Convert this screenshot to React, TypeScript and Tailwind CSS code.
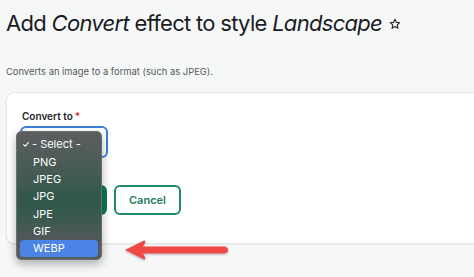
import React from "react";

const items = ["PNG", "JPEG", "JPG", "JPE", "GIF", "WEBP"];

export default function App() {
  return (
    <div className="relative w-[474px] h-[277px] overflow-hidden bg-[#f6f8f8] font-['Inter','Noto_Sans',sans-serif] text-[#1f2023]">
      <div className="pl-[6px] pt-[8px]">
        <h1 className="flex items-center text-[22px] leading-[30px] font-normal tracking-[-0.7px] text-[#1b1c1f]">
          <span>
            Add <em>Convert</em> effect to style <em>Landscape</em>
          </span>
          <svg className="ml-[7px] mt-[1px]" width="12" height="12" viewBox="0 0 24 24" fill="none" stroke="#222" strokeWidth="2.2" strokeLinejoin="round">
            <path d="M12 2.5l2.9 6.2 6.6.7-5 4.5 1.4 6.6L12 17.2l-5.9 3.3 1.4-6.6-5-4.5 6.6-.7z" />
          </svg>
        </h1>
        <p className="mt-[27px] text-[9.4px] leading-[14px] text-[#55595c]">
          Converts an image to a format (such as JPEG).
        </p>
      </div>

      <div className="ml-[6px] mt-[13px] w-[500px] h-[152px] rounded-l-[8px] border border-[#e4e8e8] bg-white shadow-[0_1px_2px_rgba(0,0,0,0.06)] pl-[15px] pt-[16px]">
        <div className="text-[10px] leading-[14px] font-semibold text-[#232429]">
          Convert to<span className="ml-[2px] text-[#d32a2a]">*</span>
        </div>
        <div className="relative mt-[3px] -ml-[2px] w-[88px] h-[32px] rounded-[6px] border-2 border-[#3c7fd6] bg-white">
          <div className="absolute left-[-6px] top-[3px] z-10 w-[86px] h-[129px] rounded-[5px] border border-[#6b6e70] bg-[linear-gradient(180deg,#5c5f60_0%,#4f5c58_20%,#3c5a4f_42%,#30574a_55%,#3d5a50_70%,#52585a_85%,#5a5d60_100%)] shadow-[0_4px_10px_rgba(0,0,0,0.3)] px-[3px] py-[4px] text-[11px] text-white">
            <div className="flex h-[17.3px] items-center">
              <span className="flex w-[12px] shrink-0 justify-start pl-[3px]">
                <svg width="6" height="5" viewBox="0 0 6 5" fill="none" stroke="#fff" strokeWidth="1.1" strokeLinecap="round" strokeLinejoin="round">
                  <path d="M0.6 2.6 L2.2 4.2 L5.4 0.7" />
                </svg>
              </span>
              <span>- Select -</span>
            </div>
            {items.map((it) => (
              <div
                key={it}
                className={
                  it === "WEBP"
                    ? "flex h-[17.3px] items-center rounded-[4px] bg-[#4b84e4] pl-[13px]"
                    : "flex h-[17.3px] items-center pl-[13px]"
                }
              >
                {it}
              </div>
            ))}
          </div>
        </div>
        <div className="mt-[27px] -ml-[2px] flex gap-[7px]">
          <button className="h-[30px] w-[87px] rounded-[6px] bg-[#0b7a55]" aria-label="Add effect"></button>
          <button className="h-[30px] w-[67px] rounded-[6px] border-2 border-[#1f8a63] bg-white text-[11px] font-semibold text-[#1d7d59]">
            Cancel
          </button>
        </div>
      </div>

      <svg className="absolute left-[120px] top-[236px]" width="115" height="30" viewBox="0 0 115 30">
        <defs>
          <filter id="sh" x="-10%" y="-30%" width="120%" height="160%">
            <feDropShadow dx="0" dy="1" stdDeviation="0.8" floodColor="#000" floodOpacity="0.3" />
          </filter>
        </defs>
        <g filter="url(#sh)" fill="#ee4a44">
          <path d="M5 14 L24 4.5 Q26 4 25 7 L23 10.5 L104 10.5 Q108 10.5 108 14 Q108 17.5 104 17.5 L23 17.5 L25 21 Q26 24 24 23.5 Z" />
        </g>
      </svg>
    </div>
  );
}
